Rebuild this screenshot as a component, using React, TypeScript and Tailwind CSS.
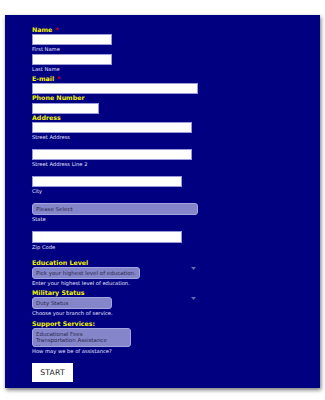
import React from "react";

const font = { fontFamily: '"DejaVu Sans", Verdana, sans-serif' };

function Label({ text, req, h = "h-[8px]" }: { text: string; req?: boolean; h?: string }) {
  return (
    <div className={`${h} leading-[8px] text-[6.3px] font-bold text-[#f2f200] whitespace-nowrap`}>
      {text}
      {req && <span className="text-[#dd0000] ml-[3px]">*</span>}
    </div>
  );
}

function Sub({ text, h }: { text: string; h: string }) {
  return (
    <div className={`${h} leading-[9px] text-[5.2px] text-[#e4e4ff] whitespace-nowrap`}>{text}</div>
  );
}

function Input({ w }: { w: string }) {
  return <div className={`${w} h-[11px] bg-white border border-[#9a9ad8] box-border`} />;
}

function Select({ w, text }: { w: string; text: string }) {
  return (
    <div
      className={`${w} h-[12px] bg-[#8585c9] border border-[#a5a5e2] rounded-[3px] box-border text-[5.5px] leading-[10px] text-[#2a2a50] pl-[3px] whitespace-nowrap overflow-hidden`}
    >
      {text}
    </div>
  );
}

function Arrow({ color = "#6a6ab0" }: { color?: string }) {
  return (
    <svg width="5" height="3" viewBox="0 0 5 3" className="absolute">
      <polygon points="0,0 5,0 2.5,3" fill={color} />
    </svg>
  );
}

export default function App() {
  return (
    <div className="w-[325px] h-[400px] bg-white overflow-hidden" style={font}>
      <div className="ml-[5px] mt-[15px] w-[315px] h-[373px] bg-[#000080] shadow-[1px_2px_4px_rgba(0,0,0,0.55)] pl-[27px] pt-[11px] flex flex-col">
        <Label text="Name" req />
        <Input w="w-[80px]" />
        <Sub text="First Name" h="h-[9px]" />
        <Input w="w-[80px]" />
        <Sub text="Last Name" h="h-[10px]" />
        <Label text="E-mail" req />
        <Input w="w-[166px]" />
        <Label text="Phone Number" h="h-[9px]" />
        <Input w="w-[67px]" />
        <Label text="Address" />
        <Input w="w-[160px]" />
        <Sub text="Street Address" h="h-[16px]" />
        <Input w="w-[160px]" />
        <Sub text="Street Address Line 2" h="h-[16px]" />
        <Input w="w-[150px]" />
        <Sub text="City" h="h-[16px]" />
        <Select w="w-[166px]" text="Please Select" />
        <Sub text="State" h="h-[16px]" />
        <div className="w-[150px] h-[12px] bg-white border border-[#9a9ad8] box-border" />
        <Sub text="Zip Code" h="h-[16px]" />
        <Label text="Education Level" />
        <div className="relative">
          <Select w="w-[108px]" text="Pick your highest level of education." />
          <div className="absolute left-[159px] top-[0px]">
            <Arrow />
          </div>
        </div>
        <Sub text="Enter your highest level of education." h="h-[10px]" />
        <Label text="Military Status" />
        <div className="relative">
          <Select w="w-[80px]" text="Duty Status" />
          <div className="absolute left-[159px] top-[0px]">
            <Arrow />
          </div>
        </div>
        <Sub text="Choose your branch of service." h="h-[11px]" />
        <Label text="Support Services:" />
        <div className="relative w-[99px] h-[19px] bg-[#8585c9] border border-[#a5a5e2] rounded-[3px] box-border overflow-hidden text-[5.5px] leading-[6.7px] text-[#2a2a50] pl-[3px] pt-[1.5px] whitespace-nowrap">
          <div>Educational Fees</div>
          <div>Transportation Assistance</div>
          <div>Housing</div>
          <div className="absolute right-[1px] top-[0px]">
            <Arrow color="#1a1a40" />
          </div>
        </div>
        <Sub text="How may we be of assistance?" h="h-[16px]" />
        <div className="w-[41px] h-[19px] bg-white flex items-center justify-center text-[7.7px] text-[#222] tracking-[0.2px]">
          START
        </div>
      </div>
    </div>
  );
}
